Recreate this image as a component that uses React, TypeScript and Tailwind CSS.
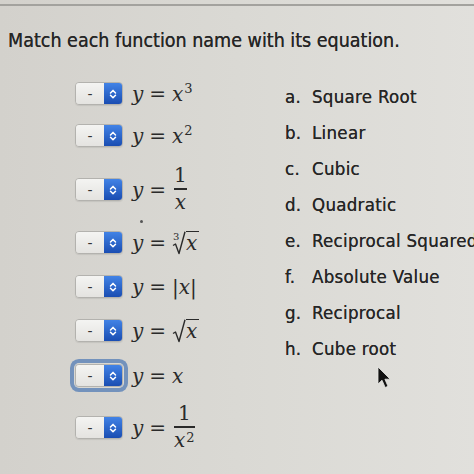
import React from 'react';

const Chevrons = () => (
  <svg width="8" height="12" viewBox="0 0 8 12" fill="none">
    <path d="M1.5 5 L4 2.4 L6.5 5 M1.5 7.2 L4 9.8 L6.5 7.2" stroke="white" strokeWidth="1.5" strokeLinecap="round" strokeLinejoin="round" />
  </svg>
);

const Select = ({ focused }: { focused?: boolean }) => (
  <div
    className={`flex h-[23px] w-[48px] shrink-0 overflow-hidden rounded-[4px] border border-[#b3b2ae] ${
      focused ? 'shadow-[0_0_0_1px_#d9d8d3,0_0_0_5px_#7392bc]' : 'shadow-[0_1px_1px_rgba(0,0,0,0.08)]'
    }`}
  >
    <div className="flex flex-1 items-center justify-center bg-gradient-to-b from-[#f4f4f2] to-[#e4e3e0] font-['DejaVu_Sans',sans-serif] text-[14px] leading-none text-[#333]">
      -
    </div>
    <div className="flex w-[18px] items-center justify-center bg-gradient-to-b from-[#4283e6] to-[#1a4db2]">
      <Chevrons />
    </div>
  </div>
);

const I = ({ children }: { children: React.ReactNode }) => <span className="italic">{children}</span>;

const Eq = () => <span className="mx-[6px] not-italic">=</span>;

const Sup = ({ children }: { children: React.ReactNode }) => (
  <sup className="relative -top-[5px] ml-[1px] text-[13px] not-italic">{children}</sup>
);

const Frac = ({ den }: { den: React.ReactNode }) => (
  <span className="inline-flex flex-col items-center px-[2px] align-middle">
    <span className="pb-[3px] leading-[20px]">1</span>
    <span className="h-[1.5px] w-full bg-[#2a2a2a]" />
    <span className="leading-[24px]">{den}</span>
  </span>
);

const Radical = ({ index }: { index?: string }) => (
  <span className="relative inline-flex items-start">
    {index && <span className="absolute left-[1px] top-[2px] text-[10px] leading-none not-italic">{index}</span>}
    <svg width="14" height="25" viewBox="0 0 14 25" fill="none" className="mt-[1px]">
      <path d="M1 14.5 L3.5 13 L7 22.5 L13 0.8" stroke="#2a2a2a" strokeWidth="1.4" strokeLinejoin="round" />
    </svg>
    <span className="mt-[1px] border-t-[1.4px] border-[#2a2a2a] pr-[2px] leading-[23px] italic">x</span>
  </span>
);

const rows: { h: number; focused?: boolean; math: React.ReactNode }[] = [
  { h: 44, math: <><I>y</I><Eq /><I>x</I><Sup>3</Sup></> },
  { h: 40, math: <><I>y</I><Eq /><I>x</I><Sup>2</Sup></> },
  { h: 68, math: <><I>y</I><Eq /><Frac den={<I>x</I>} /></> },
  { h: 38, math: <><I>y</I><Eq /><Radical index="3" /></> },
  { h: 50, math: <><I>y</I><Eq /><span className="not-italic">|</span><I>x</I><span className="not-italic">|</span></> },
  { h: 38, math: <><I>y</I><Eq /><Radical /></> },
  { h: 52, focused: true, math: <><I>y</I><Eq /><I>x</I></> },
  {
    h: 52,
    math: (
      <>
        <I>y</I>
        <Eq />
        <Frac den={<><I>x</I><Sup>2</Sup></>} />
      </>
    ),
  },
];

const names = [
  ['a.', 'Square Root'],
  ['b.', 'Linear'],
  ['c.', 'Cubic'],
  ['d.', 'Quadratic'],
  ['e.', 'Reciprocal Squared'],
  ['f.', 'Absolute Value'],
  ['g.', 'Reciprocal'],
  ['h.', 'Cube root'],
];

export default function App() {
  return (
    <div className="relative h-[474px] w-[474px] overflow-hidden bg-gradient-to-r from-[#d3d1cc] via-[#dad9d4] to-[#e1e0dc] text-[#262626]">
      <div className="h-[4px]" />
      <div className="h-[1.5px] bg-[#a3a29e]" />

      <h1 className="mt-[25px] pl-[8px] font-['DejaVu_Sans_Condensed','DejaVu_Sans',sans-serif] text-[19.5px] font-normal leading-[19px] whitespace-nowrap [text-shadow:0_0_0.6px_#333]">
        Match each function name with its equation.
      </h1>

      <div className="mt-[22px] flex items-start">
        <div className="ml-[75px] w-[210px] shrink-0">
          {rows.map((r, i) => (
            <div key={i} className="flex items-center" style={{ height: r.h }}>
              <Select focused={r.focused} />
              <div className="ml-[9px] flex items-center font-['DejaVu_Serif',serif] text-[20px] leading-none text-[#2a2a2a]">
                {r.math}
              </div>
            </div>
          ))}
        </div>

        <ul className="mt-[7px] font-['DejaVu_Sans_Condensed','DejaVu_Sans',sans-serif] text-[18.5px] leading-[36px] tracking-[0.3px] whitespace-nowrap [text-shadow:0_0_0.6px_#333]">
          {names.map(([l, n]) => (
            <li key={l} className="flex">
              <span className="w-[27px] shrink-0">{l}</span>
              <span>{n}</span>
            </li>
          ))}
        </ul>
      </div>

      <span className="absolute left-[140px] top-[220px] h-[3px] w-[3px] rounded-full bg-[#555]" />

      <svg className="absolute left-[377px] top-[366px]" width="16" height="24" viewBox="0 0 16 24">
        <path d="M1 1 L1 18 L5 14.2 L8.2 21.5 L11 20.3 L7.9 13.2 L13.2 13.2 Z" fill="#111" stroke="#e8e8e4" strokeWidth="0.8" />
      </svg>
    </div>
  );
}
